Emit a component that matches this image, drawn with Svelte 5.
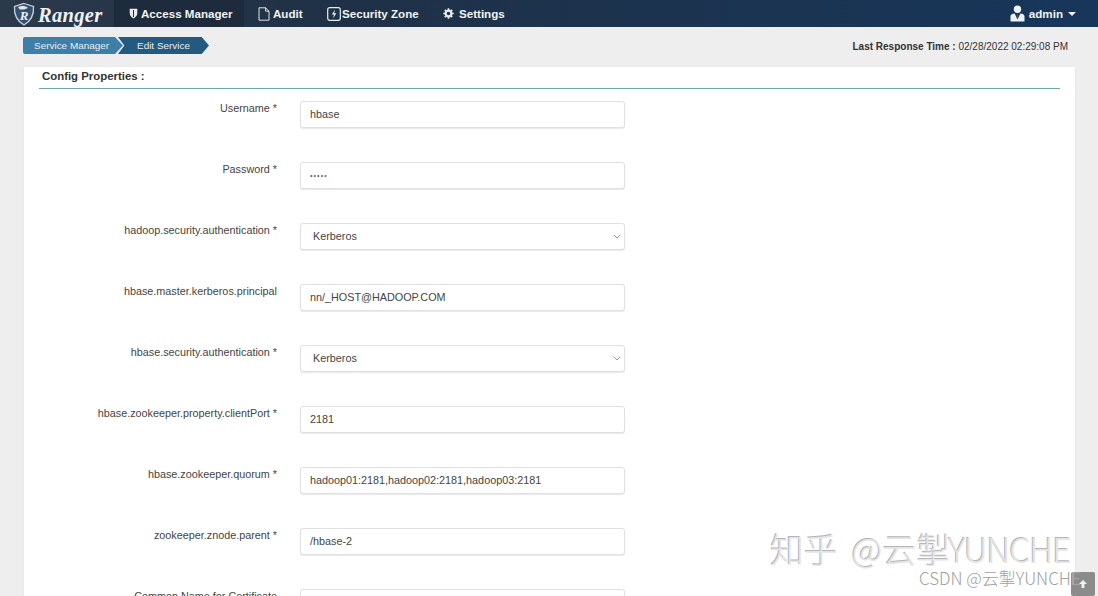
<script>
  const fields = [
    { label: 'Username *', value: 'hbase' },
    { label: 'Password *', value: '•••••', pw: true },
    { label: 'hadoop.security.authentication *', value: 'Kerberos', select: true },
    { label: 'hbase.master.kerberos.principal', value: 'nn/_HOST@HADOOP.COM' },
    { label: 'hbase.security.authentication *', value: 'Kerberos', select: true },
    { label: 'hbase.zookeeper.property.clientPort *', value: '2181' },
    { label: 'hbase.zookeeper.quorum *', value: 'hadoop01:2181,hadoop02:2181,hadoop03:2181' },
    { label: 'zookeeper.znode.parent *', value: '/hbase-2' },
    { label: 'Common Name for Certificate', value: '' }
  ];
</script>

<div class="page">
  <header class="nav">
    <div class="brand">
      <svg width="24" height="24" viewBox="0 0 24 24">
        <path d="M12 1.5 L21.5 4.5 C22 12 20 18.5 12 23 C4 18.5 2 12 2.5 4.5 Z" fill="#33506f" stroke="#c7d2dc" stroke-width="1.3"/>
        <path d="M6 5.5 C9 3.5 13 3.5 16 6 L12 7.5 L8 7.5 Z" fill="#dfe5ea"/>
        <text x="12" y="18" text-anchor="middle" class="brand-r">R</text>
      </svg>
      <span class="brand-name">Ranger</span>
    </div>
    <nav class="menu">
      <div class="item active">
        <svg width="9" height="11" viewBox="0 0 9 11"><path d="M.7 .8 H8.3 V5 C8.3 7.8 6.5 9.4 4.5 10.4 C2.5 9.4 .7 7.8 .7 5 Z" fill="#e8edf1"/><path d="M4.5 2 V9" stroke="#1d2d40" stroke-width="1"/></svg>
        <span>Access Manager</span>
      </div>
      <div class="item audit">
        <svg width="12" height="14" viewBox="0 0 12 14"><path d="M1 .8 H7.6 L11 4.2 V13.2 H1 Z M7.6 .8 V4.2 H11" fill="none" stroke="#dfe5ea" stroke-width="1"/></svg>
        <span>Audit</span>
      </div>
      <div class="item zone">
        <svg width="14" height="14" viewBox="0 0 14 14"><rect x=".7" y=".7" width="12.6" height="12.6" rx="2" fill="none" stroke="#e8edf1" stroke-width="1.2"/><path d="M8 2.6 L4.8 7.6 H7 L6 11.4 L9.4 6.2 H7.2 Z" fill="#e8edf1"/></svg>
        <span>Security Zone</span>
      </div>
      <div class="item settings">
        <svg width="11" height="11" viewBox="0 0 11 11"><circle cx="5.5" cy="5.5" r="2.9" fill="none" stroke="#e8edf1" stroke-width="2.2"/><path d="M5.5 .3 V2 M5.5 9 V10.7 M.3 5.5 H2 M9 5.5 H10.7 M1.8 1.8 L3 3 M8 8 L9.2 9.2 M9.2 1.8 L8 3 M3 8 L1.8 9.2" stroke="#e8edf1" stroke-width="1.7"/></svg>
        <span>Settings</span>
      </div>
    </nav>
    <div class="user">
      <svg width="15" height="17" viewBox="0 0 15 17"><circle cx="7.5" cy="4.2" r="3.7" fill="#eef2f5"/><path d="M.5 16.5 V11.5 C.5 9.5 2 8.6 4.5 8.4 L7.5 14 L10.5 8.4 C13 8.6 14.5 9.5 14.5 11.5 V16.5 Z" fill="#eef2f5"/><path d="M7 9 H8 L8.4 13 L7.5 14.5 L6.6 13 Z" fill="#33506f"/></svg>
      <span>admin</span>
      <i class="caret"></i>
    </div>
  </header>

  <div class="subbar">
    <div class="crumbs">
      <span class="crumb first">Service Manager</span>
      <span class="crumb second">Edit Service</span>
    </div>
    <div class="time"><b>Last Response Time :</b> 02/28/2022 02:29:08 PM</div>
  </div>

  <main class="card">
    <h2>Config Properties :</h2>
    <div class="form">
      {#each fields as f}
        <div class="row">
          <div class="label">{f.label}</div>
          <div class="control" class:pw={f.pw} class:sel={f.select}>
            <span>{f.value}</span>
            {#if f.select}
              <svg width="8" height="5" viewBox="0 0 8 5"><path d="M.8 .8 L4 4 L7.2 .8" fill="none" stroke="#999" stroke-width="1"/></svg>
            {/if}
          </div>
        </div>
      {/each}
    </div>
  </main>

  <div class="top-btn">
    <svg width="12" height="10" viewBox="0 0 12 10"><path d="M6 1 L10 5 H7.4 V9 H4.6 V5 H2 Z" fill="#f2f2f2"/></svg>
  </div>
  <div class="mark-big">知乎 @云掣<span class="latin">YUNCHE</span></div>
  <div class="mark-small">CSDN @云掣YUNCHE</div>
</div>

<style>
  :global(body) {
    margin: 0;
    background: #eeeeee;
    overflow: hidden;
  }
  .page {
    position: relative;
    height: 596px;
    overflow: hidden;
    font-family: "Liberation Sans", Arial, sans-serif;
    color: #333;
    background: #eeeeee;
  }
  .nav {
    height: 27px;
    display: flex;
    align-items: center;
    background: linear-gradient(90deg, #2b3a4b 0, #1f3146 30%, #17365a 100%);
    color: #f0f3f5;
    font-weight: 700;
    font-size: 11.6px;
  }
  .brand {
    width: 114px;
    flex: none;
    height: 27px;
    box-sizing: border-box;
    padding-left: 12px;
    display: flex;
    align-items: center;
    gap: 2px;
  }
  .brand-r {
    font: italic 700 13px "Liberation Serif", serif;
    fill: #eef2f5;
  }
  .brand-name {
    font: italic 700 20.5px "Liberation Serif", serif;
    color: #eef2f5;
    letter-spacing: .3px;
    margin-top: 3px;
  }
  .menu {
    display: flex;
    height: 27px;
  }
  .item {
    display: flex;
    align-items: center;
    height: 27px;
    box-sizing: border-box;
    white-space: nowrap;
  }
  .active {
    width: 130px;
    padding-left: 15px;
    gap: 3px;
    background: #1d2b3c;
  }
  .audit { padding-left: 14px; gap: 3px; width: 69px; }
  .zone { padding-left: 14px; gap: 1px; width: 116px; }
  .settings { padding-left: 14px; gap: 5px; }
  .user {
    margin-left: auto;
    padding-right: 22px;
    display: flex;
    align-items: center;
    gap: 4px;
  }
  .caret {
    width: 0;
    height: 0;
    margin-left: 1px;
    border-left: 4px solid transparent;
    border-right: 4px solid transparent;
    border-top: 4px solid #f0f3f5;
  }
  .subbar {
    height: 40px;
    box-sizing: border-box;
    padding: 10px 30px 0 23px;
    display: flex;
    justify-content: space-between;
    align-items: flex-start;
  }
  .crumbs {
    display: flex;
    height: 17px;
    font-size: 9.95px;
    color: #e6eef3;
    line-height: 17px;
  }
  .crumb {
    display: block;
    height: 17px;
    white-space: nowrap;
  }
  .first {
    width: 100px;
    box-sizing: border-box;
    padding-left: 11px;
    background: #3d7fa8;
    border-radius: 2px 0 0 2px;
    clip-path: polygon(0 0, 92% 0, 100% 50%, 92% 100%, 0 100%);
  }
  .second {
    width: 91px;
    box-sizing: border-box;
    margin-left: -5px;
    padding-left: 19px;
    background: #245a80;
    clip-path: polygon(0 0, 92% 0, 100% 50%, 92% 100%, 0 100%, 7% 50%);
  }
  .time {
    font-size: 10px;
    line-height: 20px;
    color: #333;
  }
  .card {
    margin: 0 23px 0 24px;
    background: #fff;
    padding: 0 15px 0 15px;
    height: 560px;
    box-shadow: 0 0 3px rgba(0, 0, 0, .04);
  }
  h2 {
    margin: 0;
    padding: 2px 0 0 3px;
    height: 19px;
    font-size: 11.4px;
    line-height: 15.5px;
    font-weight: 700;
    color: #333;
    border-bottom: 1px solid #6fa3ad;
  }
  .form {
    display: flex;
    flex-direction: column;
    padding-top: 12px;
  }
  .row {
    display: flex;
    height: 61px;
    flex: none;
  }
  .label {
    width: 253px;
    flex: none;
    text-align: right;
    font-size: 10.8px;
    line-height: 14px;
    color: #444;
    white-space: nowrap;
    margin-left: -15px;
  }
  .control {
    box-sizing: border-box;
    margin-left: 23px;
    width: 325px;
    height: 27px;
    border: 1px solid #e0e0e0;
    border-radius: 3px;
    box-shadow: 0 1px 1px #e9e9e9;
    padding-left: 9px;
    font-size: 10.8px;
    line-height: 25px;
    color: #444;
    display: flex;
    align-items: center;
    justify-content: space-between;
    background: #fff;
  }
  .sel { padding: 0 2px 0 12px; }
  .sel svg { margin-right: 1px; }
  .pw span { font-size: 7px; letter-spacing: 1.1px; color: #666; }
  .mark-big, .mark-small {
    position: absolute;
    white-space: nowrap;
    font-family: "Noto Sans CJK SC", "Liberation Sans", sans-serif;
    font-weight: 300;
    pointer-events: none;
  }
  .mark-big {
    left: 770px;
    top: 525px;
    font-size: 34px;
    line-height: 48px;
    word-spacing: 6px;
    color: #e4e4e4;
    text-shadow: -1px -1px 0 #b5b5b5;
  }
  .latin {
    letter-spacing: -1.3px;
    margin-left: -2px;
  }
  .mark-small {
    left: 919px;
    top: 567px;
    font-size: 17px;
    line-height: 22px;
    color: #a0a0a0;
    text-shadow: 0 0 1px rgba(255, 255, 255, .6);
  }
  .top-btn {
    position: absolute;
    left: 1071px;
    top: 572px;
    width: 24px;
    height: 24px;
    border-radius: 2px;
    background: #8b8b8b;
    display: flex;
    align-items: center;
    justify-content: center;
  }
</style>
